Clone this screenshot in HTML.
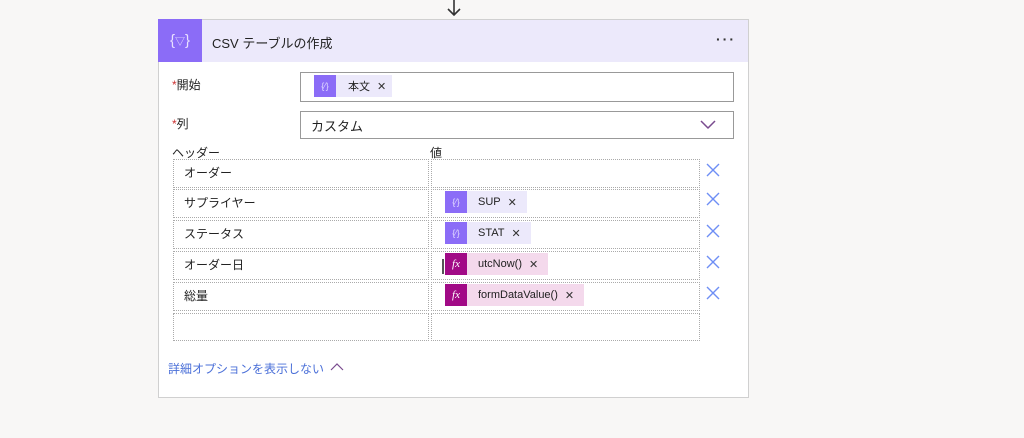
<!DOCTYPE html>
<html><head><meta charset="utf-8"><style>
*{box-sizing:border-box;margin:0;padding:0}
body{width:1024px;height:438px;background:#f8f7f6;position:relative;overflow:hidden;font-family:"Liberation Sans","Noto Sans CJK JP",sans-serif;font-size:12px;color:#222}
.a{position:absolute}
.card{left:158px;top:19px;width:591px;height:379px;background:#fff;border:1px solid #d0d0d0}
.hdr{left:158px;top:19px;width:591px;height:43px;background:#ece9fb;border:1px solid #d0d0d0;border-bottom:none}
.cell{position:absolute;border:1px dotted #aaa;background:#fff;height:29px}
.chip{position:absolute;height:22px;display:flex;align-items:center;font-size:11px}
.ic{width:22px;height:22px;display:flex;align-items:center;justify-content:center;color:#e0d8ff;font-size:9px}
.v{background:#8b6cf7}.vb{background:#ece9fb}
.f{background:#a10a86;color:#fff;font-family:"Liberation Serif",serif;font-style:italic;font-size:11px}.fb{background:#f4d9ec}
.x{font-size:11px;margin-left:7px;color:#333}
.del{position:absolute;left:706px;width:14px;height:14px}
</style></head><body>
<svg class="a" style="left:445px;top:0" width="18" height="18"><path d="M9 0V15M3 9L9 15L15 9" stroke="#333" stroke-width="1.6" fill="none"/></svg>
<div class="a card"></div>
<div class="a hdr"></div>
<div class="a" style="left:158px;top:19px;width:44px;height:43px;background:#8b6cf7;color:#e8e0ff;font-size:15px;display:flex;align-items:center;justify-content:center">{<span style="font-size:10px">▽</span>}</div>
<div class="a" style="left:212px;top:33px;font-size:13px;color:#222">CSV テーブルの作成</div>
<div class="a" style="left:716px;top:31px;font-size:14px;letter-spacing:2px;color:#333;font-weight:bold">···</div>
<div class="a" style="left:172px;top:76px"><span style="color:#c33">*</span>開始</div>
<div class="a" style="left:172px;top:115px"><span style="color:#c33">*</span>列</div>
<div class="a" style="left:300px;top:72px;width:434px;height:30px;border:1px solid #999"></div>
<div class="chip" style="left:314px;top:75px"><div class="ic v">{⁄}</div><div class="vb" style="height:22px;padding:0 6px 0 12px;display:flex;align-items:center">本文<span class="x">✕</span></div></div>
<div class="a" style="left:300px;top:111px;width:434px;height:28px;border:1px solid #999;padding:4px 10px;font-size:13px">カスタム</div>
<svg class="a" style="left:700px;top:120px" width="16" height="10"><path d="M1 1L8 8L15 1" stroke="#7a4b8f" stroke-width="1.5" fill="none"/></svg>
<div class="a" style="left:172px;top:144px">ヘッダー</div>
<div class="a" style="left:430px;top:144px">値</div>
<div class="cell" style="left:173px;top:159px;width:256px"></div><div class="cell" style="left:431px;top:159px;width:269px"></div>
<div class="cell" style="left:173px;top:189px;width:256px"></div><div class="cell" style="left:431px;top:189px;width:269px"></div>
<div class="cell" style="left:173px;top:220px;width:256px"></div><div class="cell" style="left:431px;top:220px;width:269px"></div>
<div class="cell" style="left:173px;top:251px;width:256px"></div><div class="cell" style="left:431px;top:251px;width:269px"></div>
<div class="cell" style="left:173px;top:282px;width:256px"></div><div class="cell" style="left:431px;top:282px;width:269px"></div>
<div class="cell" style="left:173px;top:313px;width:256px;height:28px"></div><div class="cell" style="left:431px;top:313px;width:269px;height:28px"></div>
<div class="a" style="left:184px;top:164px">オーダー</div>
<div class="a" style="left:184px;top:194px">サプライヤー</div>
<div class="a" style="left:184px;top:225px">ステータス</div>
<div class="a" style="left:184px;top:256px">オーダー日</div>
<div class="a" style="left:184px;top:287px">総量</div>
<div class="chip" style="left:445px;top:191px"><div class="ic v">{⁄}</div><div class="vb" style="height:22px;padding:0 10px 0 11px;display:flex;align-items:center">SUP<span class="x">✕</span></div></div>
<div class="chip" style="left:445px;top:222px"><div class="ic v">{⁄}</div><div class="vb" style="height:22px;padding:0 10px 0 11px;display:flex;align-items:center">STAT<span class="x">✕</span></div></div>
<div class="a" style="left:442px;top:259px;width:2px;height:15px;background:#555"></div>
<div class="chip" style="left:445px;top:253px"><div class="ic f">fx</div><div class="fb" style="height:22px;padding:0 10px 0 11px;display:flex;align-items:center">utcNow()<span class="x">✕</span></div></div>
<div class="chip" style="left:445px;top:284px"><div class="ic f">fx</div><div class="fb" style="height:22px;padding:0 10px 0 11px;display:flex;align-items:center">formDataValue()<span class="x">✕</span></div></div>
<svg class="del" style="top:163px"><path d="M1 1L13 13M13 1L1 13" stroke="#6e8ef5" stroke-width="1.4"/></svg>
<svg class="del" style="top:192px"><path d="M1 1L13 13M13 1L1 13" stroke="#6e8ef5" stroke-width="1.4"/></svg>
<svg class="del" style="top:224px"><path d="M1 1L13 13M13 1L1 13" stroke="#6e8ef5" stroke-width="1.4"/></svg>
<svg class="del" style="top:255px"><path d="M1 1L13 13M13 1L1 13" stroke="#6e8ef5" stroke-width="1.4"/></svg>
<svg class="del" style="top:286px"><path d="M1 1L13 13M13 1L1 13" stroke="#6e8ef5" stroke-width="1.4"/></svg>
<div class="a" style="left:168px;top:360px;color:#4a6fd8">詳細オプションを表示しない</div>
<svg class="a" style="left:330px;top:362px" width="14" height="9"><path d="M1 8L7 2L13 8" stroke="#7a4b8f" stroke-width="1.2" fill="none"/></svg>
</body></html>
